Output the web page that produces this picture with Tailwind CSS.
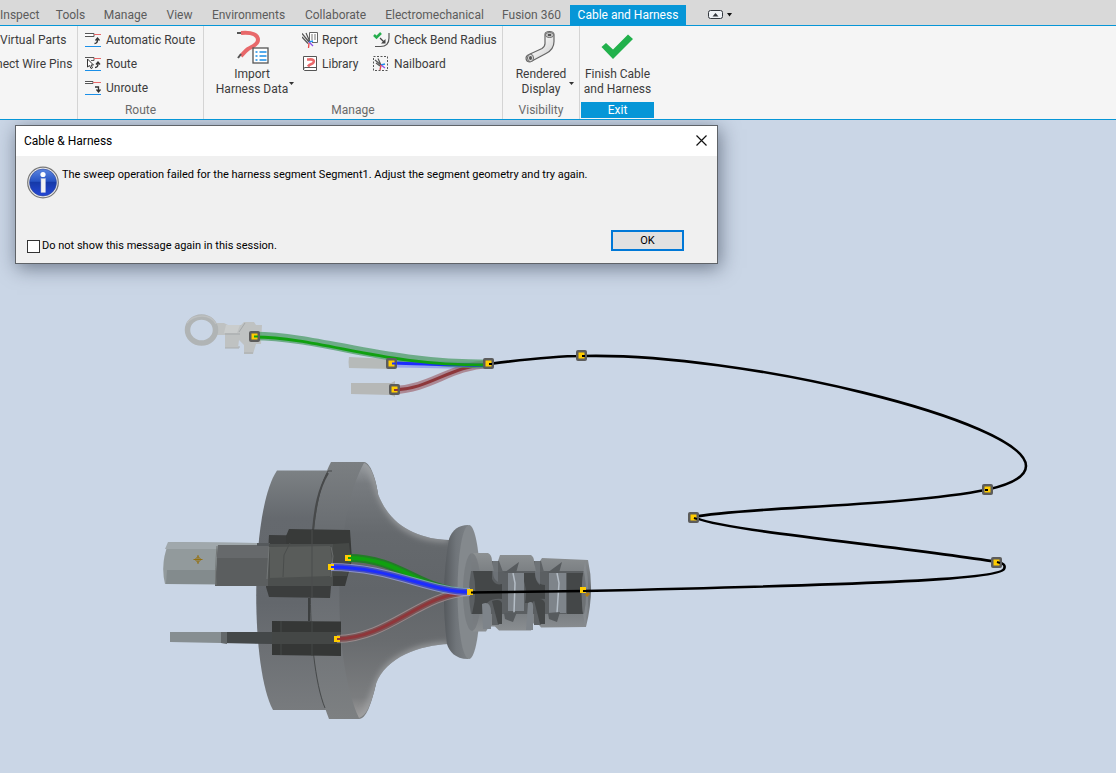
<!DOCTYPE html>
<html lang="en">
<head>
<meta charset="utf-8">
<title>Cable and Harness</title>
<script src="https://cdn.jsdelivr.net/npm/@tailwindcss/browser@4"></script>
</head>
<body class="flex h-screen flex-col overflow-hidden bg-[#cad6e6] font-['Roboto','Noto_Sans',sans-serif] text-xs text-[#3c3c3c]">

<!-- Ribbon tabs -->
<nav class="flex h-[26px] shrink-0 items-end border-b border-[#0696d7] bg-[#d9d9d9] text-[#5c5c5c]" aria-label="Ribbon tabs">
  <button class="h-5 w-[47px] pr-2.5 text-right whitespace-nowrap">Inspect</button>
  <button class="h-5 w-[47px] whitespace-nowrap">Tools</button>
  <button class="h-5 w-[63px] whitespace-nowrap">Manage</button>
  <button class="h-5 w-[45px] whitespace-nowrap">View</button>
  <button class="h-5 w-[93px] whitespace-nowrap">Environments</button>
  <button class="h-5 w-[81px] whitespace-nowrap">Collaborate</button>
  <button class="h-5 w-[117px] whitespace-nowrap">Electromechanical</button>
  <button class="h-5 w-[77px] whitespace-nowrap">Fusion 360</button>
  <button class="h-5 w-[116px] whitespace-nowrap bg-[#0696d7] text-white">Cable and Harness</button>
  <button class="ml-[22px] flex h-5 items-center gap-1" aria-label="Ribbon display">
    <svg width="15" height="10" viewBox="0 0 15 10"><rect x=".5" y=".5" width="14" height="8" rx="2" fill="#eef1f5" stroke="#33373d"/><path d="M4.500 6.500 7.500 3 10.500 6.500z" fill="#33373d"/></svg>
    <svg width="6" height="4" viewBox="0 0 6 4"><path d="M0 0h5L2.500 3.500z" fill="#111"/></svg>
  </button>
</nav>

<!-- Ribbon panels -->
<div class="flex h-[94px] shrink-0 border-b border-[#0696d7] bg-[#f5f5f5]">
  <section class="flex w-[78px] flex-col items-start overflow-hidden border-r border-[#d4d4d4] pt-0.5">
    <button class="h-6 whitespace-nowrap">Virtual Parts</button>
    <button class="-ml-1 h-6 whitespace-nowrap">nect Wire Pins</button>
  </section>

  <section class="flex w-[126px] flex-col border-r border-[#d4d4d4] pt-0.5">
    <button class="flex h-6 items-center gap-1 whitespace-nowrap pl-[7px]">
      <svg width="17" height="16" viewBox="0 0 17 16"><path d="M0 1.500h9v3H0" fill="#fff" stroke="#555"/><path d="M9 2.500h7" stroke="#e8686a"/><path d="M0 14.500h16" stroke="#1a8fe8"/><path d="M9.500 11.500q3 0 3-4M10.500 8.500l2-2.500 2 2.500" fill="none" stroke="#333" stroke-width="1.300"/></svg>Automatic Route</button>
    <button class="flex h-6 items-center gap-1 whitespace-nowrap pl-[7px]">
      <svg width="17" height="16" viewBox="0 0 17 16"><path d="M0 1.500h9v3H6" fill="none" stroke="#555"/><path d="M9 2.500h7" stroke="#e8686a"/><path d="M0 14.500h16" stroke="#1a8fe8"/><path d="M10 11.500q3 0 3-4M11 8.500l2-2.500 2 2.500" fill="none" stroke="#333" stroke-width="1.300"/><path d="M2.500 3v8l2-1.500 1.500 3 1.500-.7L6 9h2.500z" fill="#fff" stroke="#333"/></svg>Route</button>
    <button class="flex h-6 items-center gap-1 whitespace-nowrap pl-[7px]">
      <svg width="17" height="16" viewBox="0 0 17 16"><path d="M0 1.500h8v2H0" fill="#fff" stroke="#555"/><path d="M8 2.500h8" stroke="#e8686a"/><path d="M0 14.500h16" stroke="#1a8fe8"/><path d="M10 7h3.500v4M11.500 9.500l2 2.500 2-2.500" fill="none" stroke="#333" stroke-width="1.300"/></svg>Unroute</button>
    <h2 class="mt-auto text-center leading-[18px] text-[#6a6a6a]">Route</h2>
  </section>

  <section class="flex w-[299px] flex-col border-r border-[#d4d4d4] pt-0.5">
    <div class="flex">
      <button class="flex w-[96px] flex-col items-center gap-[3px] pt-0.5 leading-[15px]">
        <svg width="34" height="34" viewBox="0 0 34 34"><path d="M2 3h5" stroke="#555" stroke-width="2"/><path d="M6 3C18 2 23 5 23 10S16 17 13 19 8 24 6 26" fill="none" stroke="#e8686a" stroke-width="4"/><path d="M6 24 3 28" stroke="#555" stroke-width="2"/><rect x="18" y="18" width="15" height="15" fill="#fff" stroke="#555" stroke-width="1.300"/><path d="M20.500 22h2m2 0h7m-11 4h2m2 0h7m-11 4h2m2 0h7" stroke="#1a8fe8" stroke-width="1.500"/></svg>
        <span class="whitespace-nowrap">Import<br>Harness Data</span>
      </button>
      <svg class="-ml-[11px] mr-1.5 mt-[54px]" width="7" height="4" viewBox="0 0 7 4" aria-hidden="true"><path d="M0 0h5L2.500 3z" fill="#333"/></svg>
      <div class="flex w-[71px] flex-col">
        <button class="flex h-6 items-center gap-1 whitespace-nowrap">
          <svg width="16" height="16" viewBox="0 0 16 16"><path d="M7.500 9V.5h8v10H10" fill="#fff" stroke="#666"/><path d="M9 3h2m1 0h2M9 5h2m1 0h2M9 7h2m1 0h2" stroke="#777"/><path d="M0 1.500 7 10M0 5l6 6.500M4 1l4 9" stroke="#555" stroke-width="1.200"/><path d="m7 10 4-1" stroke="#1a8fe8" stroke-width="1.300"/><path d="m7 10 4 4" stroke="#8a4be8" stroke-width="1.300"/><path d="M7 11 6.500 16" stroke="#e8484a" stroke-width="1.300"/></svg>Report</button>
        <button class="flex h-6 items-center gap-1 whitespace-nowrap">
          <svg width="16" height="16" viewBox="0 0 16 16"><path d="M1.500 14V.5h13v14H2.500q-1-.5-1-1.500t1.500-1.500h11.500" fill="#fff" stroke="#555"/><path d="M5 3.500h2c4-.5 5.500 1 4.500 3S8 7.500 6 10.500" fill="none" stroke="#e8686a" stroke-width="2.600"/></svg>Library</button>
      </div>
      <div class="flex flex-col">
        <button class="flex h-6 items-center gap-1 whitespace-nowrap">
          <svg width="17" height="16" viewBox="0 0 17 16"><path d="m1 3 2.500 2.500L8 1" fill="none" stroke="#27ae4e" stroke-width="2.500"/><path d="M16 1v5q0 8.500-8.500 8.500H2" fill="none" stroke="#555" stroke-width="1.200"/><path d="m7 6 4 4" stroke="#444" stroke-width="1.300"/><path d="M12.500 7v4.500H8z" fill="#444"/></svg>Check Bend Radius</button>
        <button class="flex h-6 items-center gap-1 whitespace-nowrap">
          <svg width="17" height="16" viewBox="0 0 17 16"><rect x=".5" y=".5" width="14" height="14" fill="none" stroke="#555" stroke-dasharray="2 1.500"/><path d="M2 4l6 5M3 7l4 3M5 2.500 8 9" stroke="#555" stroke-width="1.200"/><path d="m8 9 4-1" stroke="#1a8fe8" stroke-width="1.300"/><path d="m8 9 4 3" stroke="#8a4be8" stroke-width="1.300"/><path d="m8 9-1 5" stroke="#e8484a" stroke-width="1.300"/></svg>Nailboard</button>
      </div>
    </div>
    <h2 class="mt-auto text-center leading-[18px] text-[#6a6a6a]">Manage</h2>
  </section>

  <section class="flex w-[77px] flex-col border-r border-[#d4d4d4] pt-0.5">
    <div class="flex">
      <button class="flex w-[66px] flex-col items-center gap-[3px] pt-0.5 pl-2.5 leading-[15px]">
        <svg width="34" height="34" viewBox="0 0 34 34"><defs><linearGradient id="tube" x1="0" y1="0" x2="1" y2="1"><stop offset=".3" stop-color="#fff"/><stop offset="1" stop-color="#c5c5c5"/></linearGradient></defs><path d="M22 5v9q0 3-3 5L6 25c-5 2-3 9 2 7l15-8q8-4 8-12V5c0-4-9-4-9 0z" transform="translate(-1 -.5)" fill="url(#tube)" stroke="#666" stroke-width="1.200"/><ellipse cx="25.500" cy="5" rx="4" ry="2.500" fill="#ddd" stroke="#666"/><ellipse cx="25.500" cy="5" rx="2" ry="1.300" fill="#555"/><ellipse cx="6.500" cy="28" rx="3" ry="3.700" fill="#ddd" stroke="#666"/><ellipse cx="6.500" cy="28" rx="1.500" ry="2" fill="#555"/></svg>
        <span class="whitespace-nowrap">Rendered<br>Display</span>
      </button>
      <svg class="mt-[54px]" width="7" height="4" viewBox="0 0 7 4" aria-hidden="true"><path d="M0 0h5L2.500 3z" fill="#333"/></svg>
    </div>
    <h2 class="mt-auto text-center leading-[18px] text-[#6a6a6a]">Visibility</h2>
  </section>

  <section class="flex w-[75px] flex-col px-px pt-0.5">
    <button class="flex flex-col items-center gap-[3px] pt-0.5 leading-[15px]">
      <svg width="34" height="34" viewBox="0 0 34 34"><path d="M.5 17 5 13l7 6.500L27 4.500l5 4.500-20 20z" fill="#22b14c"/></svg>
      <span class="whitespace-nowrap">Finish Cable<br>and Harness</span>
    </button>
    <h2 class="mt-auto mb-px bg-[#0696d7] text-center leading-4 text-white">Exit</h2>
  </section>
</div>

<!-- Model view -->
<main class="relative min-h-0 flex-1 overflow-hidden">
  <svg class="h-full w-full" viewBox="0 120 1116 653" role="img" aria-label="Power plug with cable route">
    <defs>
      <linearGradient id="disc" x1="0" y1="0" x2="0" y2="1"><stop offset="0" stop-color="#7c8184"/><stop offset=".2" stop-color="#65696e"/><stop offset=".55" stop-color="#63676c"/><stop offset="1" stop-color="#787b7e"/></linearGradient>
      <linearGradient id="rim" x1="0" y1="0" x2="0" y2="1"><stop offset="0" stop-color="#7b7f82"/><stop offset=".25" stop-color="#6a6e72"/><stop offset=".45" stop-color="#676b70"/><stop offset="1" stop-color="#7d8082"/></linearGradient>
      <linearGradient id="bell" x1="0" y1="0" x2="0" y2="1"><stop offset="0" stop-color="#999da1"/><stop offset=".08" stop-color="#777b7f"/><stop offset=".28" stop-color="#65696d"/><stop offset=".5" stop-color="#616569"/><stop offset=".7" stop-color="#696c6f"/><stop offset=".92" stop-color="#7b7d7f"/><stop offset="1" stop-color="#a09f9f"/></linearGradient>
      <linearGradient id="flange" x1="0" y1="0" x2="1" y2="0"><stop offset="0" stop-color="#55595d"/><stop offset=".5" stop-color="#70757a"/><stop offset="1" stop-color="#7c8185"/></linearGradient>
      <linearGradient id="collar" x1="0" y1="0" x2="0" y2="1"><stop offset="0" stop-color="#8d9193"/><stop offset=".5" stop-color="#676c71"/><stop offset="1" stop-color="#8b8f92"/></linearGradient>
      <g id="node"><rect x="-5.500" y="-5.500" width="11" height="11" rx="2" fill="#5c5c5c"/><rect x="-3" y="-3" width="6" height="6" fill="#ffcc00"/></g>
      <rect id="pin" x="-3" y="-3" width="6" height="6" fill="#ffcc00"/>
      <clipPath id="bellClip"><path d="M364 463C371 465 376 480 378 494C391 528 420 539 449 540V644C420 645 386 657 376 684C371 705 366 716 359 718C332 660 332 520 364 463z"/></clipPath>
      <filter id="soft"><feGaussianBlur stdDeviation="3"/></filter>
    </defs>

    <!-- ring terminal and crimp pins -->
    <g>
      <path d="M217 323h7l4 2h13l3-3h10l2 3h6l-1 19h-5l-3 10h-9v-9l-5-5-1 8h-13v-13h-9z" fill="#bfc2c2"/>
      <path d="M226 325h14l-3 8h-13z" fill="#cacdcd"/><path d="M225 334h15m-1-2 6-9" stroke="#a4a8aa" fill="none"/>
      <path d="M225 348h14v-2M244 353h9" stroke="#a9adae" fill="none"/>
      <ellipse cx="201.500" cy="330" rx="14" ry="13" fill="none" stroke="#b0b4b5" stroke-width="5.500"/>
      <path d="M187 323q5-7 15-7 10 0 14 8" fill="none" stroke="#bdc0c1" stroke-width="1.500"/>
      <path d="m349 357 42 2v10l-42-1q-1-6 0-11z" fill="#b6bab9"/><path d="M351 383h40l4-2v16l-4-2-40-1z" fill="#b6b8b7"/>
    </g>
    <g fill="none">
      <path d="M392 364C430 364 460 366 489 365" stroke="#7a88ee" stroke-width="7" opacity=".65"/>
      <path d="M394 390C430 389 450 366 489 364" stroke="#985660" stroke-width="8" opacity=".6"/>
      <path d="M394 390C430 389 450 366 489 364" stroke="#8d373b" stroke-width="3"/>
      <path d="M254 336C325 337 380 364 489 364" stroke="#4e9c68" stroke-width="8.500" opacity=".75"/>
      <path d="M392 363C430 364 460 366 489 365" stroke="#1c2cff" stroke-width="3"/>
      <path d="M254 337C325 338 380 366 489 365" stroke="#10a010" stroke-width="3"/>
    </g>

    <!-- plug body -->
    <path d="M277 470.500H335V710H273C250 668 250 510 277 470.500z" fill="url(#disc)"/>
    <path d="M331 462H364C371 463 376 480 378 494L376 684C371 705 366 719 359 719H329C305 660 300 520 331 462z" fill="url(#rim)"/>
    <path d="M364 463C371 465 376 480 378 494C391 528 420 539 449 540V644C420 645 386 657 376 684C371 705 366 716 359 718C332 660 332 520 364 463z" fill="url(#bell)"/>
    <g clip-path="url(#bellClip)"><path d="M368 463C376 480 376 484 380 494C393 528 420 539 449 539M449 645C420 646 386 658 378 684L364 718" fill="none" stroke="#a3a5a7" stroke-width="5" filter="url(#soft)"/></g>
    <path d="M332 471h-4C305 510 305 660 325 708" fill="none" stroke="#46494a" stroke-width="1"/>
    <path d="M328 473C318 490 315 508 313 530" fill="none" stroke="#47494a" stroke-width="2"/>

    <!-- prongs and their sockets -->
    <path d="m169 542 89 1v42l-93-1q-5-21 4-42z" fill="#929a9c"/>
    <path d="M167 570h93v14h-94z" fill="#838b8d"/><path d="m168 542 90 1v6h-93z" fill="#a0a8ac"/>
    <path d="m269 535 62 1v50l-1 12-61-1-3-10z" fill="#3b3d3d"/>
    <path d="m289 529 61 1 2 30-7 26h-56l-3-50z" fill="#383a39"/>
    <path d="M218 545h52v41h-55z" fill="#5b5e5f"/><path d="M218 545h52v13h-53z" fill="#66696b"/><path d="M257 543h13v3h-13z" fill="#55595c"/>
    <path d="M269 544h64v42h-65z" fill="#4c4f4e"/><path d="m270 547 60-1 2 15-2 15-60 2z" fill="#595c5a"/>
    <path d="m333 544 16-1 2 17-4 16h-14z" fill="#454846"/>
    <path d="m290 543-6 12-1 22M312 530v67" stroke="#4a4d4c" fill="none"/><path d="m331 547 2 9-2 21" stroke="#696c6b" fill="none"/>
    <path d="M217 546q-2 24-1 39M269 547l-2 32" stroke="#737777" fill="none"/>
    <path d="M170 632h51v11l-51-1z" fill="#868e91"/><path d="M221 632h52v12l-52-1z" fill="#444849"/><path d="M221 632h6v12l-6-1z" fill="#63686a"/>
    <path d="m272 621 69 .5V656l-69-1z" fill="#353736"/><path d="M272 632h69v12h-69z" fill="#444746"/><path d="M281 621v34M312 621v35" stroke="#454847"/>
    <path d="M309 598v23" stroke="#3c3f40" stroke-width="2"/>
    <path d="M198 555v9m-4.500-4.500h9M195 559.500l3-3 3 3-3 3z" fill="none" stroke="#94700e"/>

    <!-- strain relief -->
    <path d="M449 539Q454 525 468 525V659C455 659 449 651 447 644Q440 590 449 539z" fill="url(#flange)"/>
    <ellipse cx="469" cy="592" rx="11.500" ry="67" fill="#84898d"/>
    <path d="M471 553h17q4 2 4 8h6l2-6h31q3 2 3 6h6l2-3 46 2q7 31-2 67l-45 .5-3-4h-5l-2 7h-32l-4-4h-6l-3 5h-13z" fill="url(#collar)"/>
    <ellipse cx="472" cy="592" rx="9" ry="39" fill="#73787c" opacity=".7"/>
    <path d="M471 571h113q4 22 0 43H471q-4-21 0-43z" fill="#5b5f62"/>
    <g fill="#5e6265"><path d="M492 561h7l4 11h-9zM534 561h7l3 11h-8zM492 614h9l-2 11h-7zM534 614h9l-2 11h-7z"/></g>
    <g fill="#444748"><path d="M473 571h19v8q3 7 10 5v15q-10-1-15 4l-3 11h-12q6-22 1-43zM521 573h14q1 12 10 12v14q-9-1-13 4h-7q3-15-4-30zM567 573h17q4 20 0 41h-17zM492 601q8-3 10 2v21h-4zM534 600q9-3 11 3v21h-5z"/></g>
    <g fill="#7e848a"><path d="M508 573h16v38h-16zM549 573h17v40h-17zM482 604q8-4 9 7v18h-8zM528 603q6-4 5 7v20h-7z"/><path d="M493 561h5v21q-5-3-5-9zM535 561h5v24q-5-4-5-11z" opacity=".5"/></g>
    <path d="m513 573 2 10-1 30M557 573l2 10-2 30" stroke="#b4bdc6" stroke-width="1.500" fill="none"/>
    <path d="m519 562-3 11h-12zM562 562l-3 11h-12zM504 613l13-1-4 10-8-3zM548 613l12-1-3 10-8-3z" fill="#575b5e"/>
    <path d="M585 561q7 31 0 65-7-31 0-65z" fill="#8a9095" opacity=".6"/>
    <path d="m586 596 3-3" stroke="#b07c12" stroke-width="3"/>

    <!-- conductors inside the plug -->
    <g fill="none">
      <path d="M348 558C402 558 420 592 470 592" stroke="#237c27" stroke-width="8"/>
      <path d="M348 558C402 558 420 592 470 592" stroke="#10a010" stroke-width="4"/>
      <path d="M337 639C390 638 420 594 470 592" stroke="#b9a0a2" stroke-width="8" opacity=".6"/>
      <path d="M337 639C390 638 420 594 470 592" stroke="#7d5355" stroke-width="6"/>
      <path d="M337 639C390 638 420 594 470 592" stroke="#8f363a" stroke-width="3"/>
      <path d="M331 567C390 567 430 592 470 592" stroke="#a8adf4" stroke-width="8" opacity=".65"/>
      <path d="M331 567C390 567 430 592 470 592" stroke="#444dc0" stroke-width="6"/>
      <path d="M331 567C390 567 430 592 470 592" stroke="#1c2cff" stroke-width="3"/>
    </g>

    <!-- cable centreline -->
    <path d="M489 364C520 360 550 356 582 356C740 352 1026 421 1026 466C1026 476 1012 484 988 489.500C900 507 740 507 694 517C715 530 900 546 997 562C1003 563 1006 565 1004 569C1000 580 850 585 583 591L470 592.500" fill="none" stroke="#000" stroke-width="2.600"/>
    <g>
      <use href="#node" x="254.500" y="336.500"/><use href="#node" x="391.500" y="363.500"/><use href="#node" x="394.500" y="389.500"/>
      <use href="#node" x="488.500" y="363.500"/><use href="#node" x="581.500" y="355.500"/><use href="#node" x="987.500" y="489.500"/>
      <use href="#node" x="693.500" y="517.500"/><use href="#node" x="996.500" y="562.500"/>
      <use href="#pin" x="348" y="558"/><use href="#pin" x="331" y="567"/><use href="#pin" x="337" y="639"/><use href="#pin" x="470" y="592"/><use href="#pin" x="583" y="590"/>
    </g>
    <g fill="none" stroke-width="2"><path d="M254 336.500h4M348 558h4" stroke="#10a010"/><path d="M392 363.500h4M331 567h4" stroke="#1c2cff"/><path d="M394 390h4M337 639h4" stroke="#8f363a"/><path d="M489 364h3M582 356h3M985 490h3M694 518l3 1M997 562l3 1M471 592.500h4M583 591h4" stroke="#000"/></g>
  </svg>

  <!-- Message dialog -->
  <section role="dialog" aria-labelledby="dlg-title" class="absolute top-[5px] left-[15px] w-[703px] border border-[#5f6368] bg-[#f0f0f0] text-[11px] text-black shadow-[2px_4px_18px_rgba(20,30,50,0.5)]">
    <header class="flex h-[30px] items-center justify-between bg-white pr-2.5 pb-px pl-2">
      <h1 id="dlg-title" class="text-xs">Cable &amp; Harness</h1>
      <button class="leading-none" aria-label="Close"><svg width="11" height="11" viewBox="0 0 11 11"><path d="m.5.5 10 10m0-10-10 10" stroke="#111" stroke-width="1.200"/></svg></button>
    </header>
    <div class="flex gap-[3px] pt-2.5 pl-[11px]">
      <svg width="32" height="33" viewBox="0 0 32 33" aria-hidden="true"><defs><linearGradient id="info" x1="0" y1="0" x2="0" y2="1"><stop offset="0" stop-color="#5b85df"/><stop offset=".45" stop-color="#2854c4"/><stop offset=".5" stop-color="#163aa9"/><stop offset="1" stop-color="#2447d6"/></linearGradient></defs><circle cx="16" cy="16.500" r="15.300" fill="#ededed" stroke="#777" stroke-width="1.200"/><circle cx="16" cy="16.500" r="13.500" fill="url(#info)" stroke="#2b459a" stroke-width=".6"/><circle cx="16" cy="8.500" r="2.600" fill="#fff"/><rect x="14" y="12.500" width="4.500" height="14" fill="#f3f3f3" stroke="#aab8df" stroke-width=".5"/></svg>
      <p class="pt-px whitespace-nowrap leading-4">The sweep operation failed for the harness segment Segment1. Adjust the segment geometry and try again.</p>
    </div>
    <div class="flex items-start justify-between pt-[31px] pr-[33px] pb-[9px] pl-[11px]">
      <label class="mt-2 flex items-center gap-0.5 leading-4"><input type="checkbox" class="h-[13px] w-[13px] appearance-none border border-[#333] bg-white">Do not show this message again in this session.</label>
      <button class="h-[21px] w-[73px] border-2 border-[#0078d7] bg-[#e1e1e1] leading-4">OK</button>
    </div>
  </section>
</main>
</body>
</html>
